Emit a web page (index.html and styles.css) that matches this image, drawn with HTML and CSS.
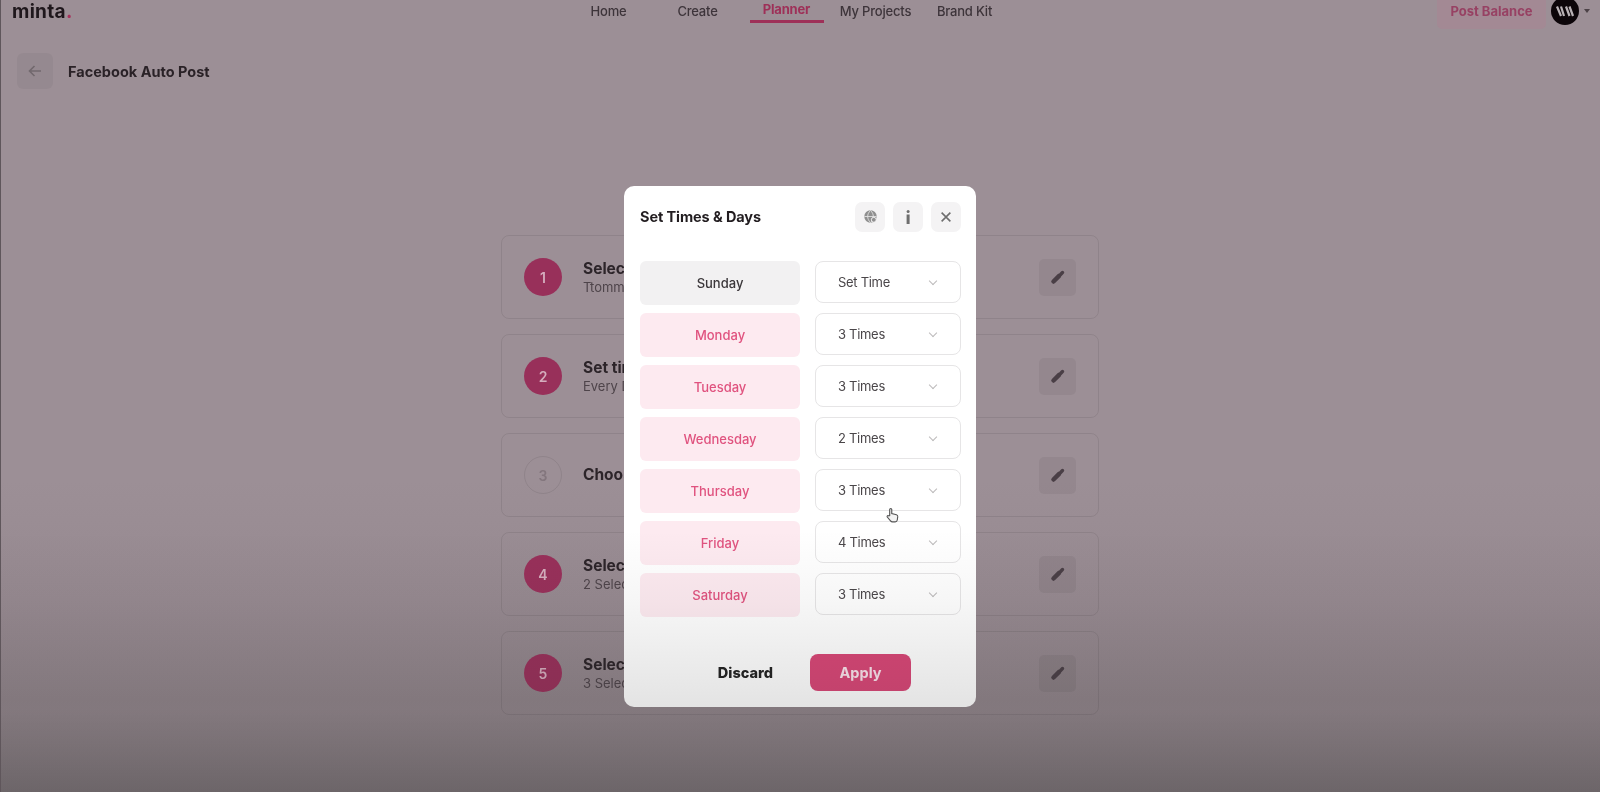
FILE: index.html
```html
<!DOCTYPE html>
<html lang="en">
<head>
<meta charset="utf-8">
<title>Facebook Auto Post</title>
<link rel="stylesheet" href="styles.css">
</head>
<body>
<div class="page">
  <header class="topbar">
    <div class="logo">minta<span class="logo-dot">.</span></div>
    <nav class="nav">
      <a class="nav-item">Home</a>
      <a class="nav-item">Create</a>
      <a class="nav-item nav-active">Planner</a>
      <a class="nav-item">My Projects</a>
      <a class="nav-item">Brand Kit</a>
    </nav>
    <div class="account">
      <div class="balance">Post Balance</div>
      <div class="avatar">
        <svg viewBox="0 0 28 28" width="28" height="28"><path d="M6 9.500 10 19M10 9.500 13 19M15 9.500 18.500 19M18.500 9.500 22 19" fill="none" stroke="#b9b2b6" stroke-width="2.200"/></svg>
      </div>
      <span class="caret"></span>
    </div>
  </header>

  <div class="subbar">
    <button class="back">
      <svg viewBox="0 0 16 16" width="16" height="16"><path d="M14 8H2.500M7.500 3 2.500 8l5 5" fill="none" stroke="#71686d" stroke-width="1.600"/></svg>
    </button>
    <h1 class="page-title">Facebook Auto Post</h1>
  </div>

  <main class="steps">
    <section class="step">
      <div class="num">1</div>
      <div class="step-text"><div class="step-title">Select Facebook Page</div><div class="step-sub">Ttommy Page</div></div>
      <button class="edit"><svg viewBox="0 0 16 16" width="18" height="18"><path class="pen" d="M4 12 9 7"/><path class="pen-tip" d="M10.500 5.500 12 4"/></svg></button>
    </section>
    <section class="step">
      <div class="num">2</div>
      <div class="step-text"><div class="step-title">Set times and days</div><div class="step-sub">Every Day</div></div>
      <button class="edit"><svg viewBox="0 0 16 16" width="18" height="18"><path class="pen" d="M4 12 9 7"/><path class="pen-tip" d="M10.500 5.500 12 4"/></svg></button>
    </section>
    <section class="step">
      <div class="num num-empty">3</div>
      <div class="step-text"><div class="step-title">Choose a template</div></div>
      <button class="edit"><svg viewBox="0 0 16 16" width="18" height="18"><path class="pen" d="M4 12 9 7"/><path class="pen-tip" d="M10.500 5.500 12 4"/></svg></button>
    </section>
    <section class="step">
      <div class="num">4</div>
      <div class="step-text"><div class="step-title">Select categories</div><div class="step-sub">2 Selected</div></div>
      <button class="edit"><svg viewBox="0 0 16 16" width="18" height="18"><path class="pen" d="M4 12 9 7"/><path class="pen-tip" d="M10.500 5.500 12 4"/></svg></button>
    </section>
    <section class="step">
      <div class="num">5</div>
      <div class="step-text"><div class="step-title">Select products</div><div class="step-sub">3 Selected</div></div>
      <button class="edit"><svg viewBox="0 0 16 16" width="18" height="18"><path class="pen" d="M4 12 9 7"/><path class="pen-tip" d="M10.500 5.500 12 4"/></svg></button>
    </section>
  </main>

  <div class="modal">
    <div class="modal-head">
      <h2 class="modal-title">Set Times &amp; Days</h2>
      <div class="modal-tools">
        <button class="tool"><svg viewBox="0 0 16 16" width="15" height="15"><circle cx="8" cy="8" r="6.600" fill="#8f8f8f"/><path d="M1.500 8h13M8 1.500c-4 4-4 9 0 13M8 1.500c4 4 4 9 0 13" fill="none" stroke="#e6e6e6" stroke-width=".9"/><circle cx="11.500" cy="11.500" r="2.600" fill="#8f8f8f" stroke="#f4f3f4"/></svg></button>
        <button class="tool"><svg viewBox="0 0 16 16" width="16" height="16"><rect x="6.600" y="1" width="3" height="3" rx="1.500" fill="#6e6e6e"/><rect x="6.600" y="5.500" width="3" height="9.500" fill="#6e6e6e"/></svg></button>
        <button class="tool"><svg viewBox="0 0 16 16" width="14" height="14"><path d="M3 3l10 10M13 3 3 13" fill="none" stroke="#6e6e6e" stroke-width="1.800"/></svg></button>
      </div>
    </div>
    <div class="days">
      <div class="day day-off">Sunday</div>
      <div class="select"><span>Set Time</span><i class="chev"></i></div>
      <div class="day">Monday</div>
      <div class="select"><span>3 Times</span><i class="chev"></i></div>
      <div class="day">Tuesday</div>
      <div class="select"><span>3 Times</span><i class="chev"></i></div>
      <div class="day">Wednesday</div>
      <div class="select"><span>2 Times</span><i class="chev"></i></div>
      <div class="day">Thursday</div>
      <div class="select"><span>3 Times</span><i class="chev"></i></div>
      <div class="day">Friday</div>
      <div class="select"><span>4 Times</span><i class="chev"></i></div>
      <div class="day">Saturday</div>
      <div class="select"><span>3 Times</span><i class="chev"></i></div>
    </div>
    <div class="modal-foot">
      <button class="discard">Discard</button>
      <button class="apply">Apply</button>
    </div>
  </div>

  <svg class="cursor" viewBox="0 0 16 18" width="15" height="17"><path d="M5 9V2.600a1.100 1.100 0 0 1 2.200 0V7l5 1.200c1 .3 1.500 1 1.400 2l-.5 3.600c-.2 1.200-1 2-2.200 2H8c-.9 0-1.600-.4-2.100-1.100L2.400 10.600c-.6-1 .7-2 1.600-1.200Z" fill="#f3f3f3" stroke="#555" stroke-width="1.200"/></svg>
  <div class="shade"></div>
</div>
</body>
</html>
```
FILE: styles.css
```css
* { box-sizing: border-box; }
html, body { margin: 0; height: 792px; overflow: hidden; }
body { font-family: Inter, "Noto Sans", sans-serif; color: #2c2429; }
button { font: inherit; border: 0; padding: 0; }
h1, h2 { margin: 0; }

.page {
  position: relative;
  width: 1600px;
  height: 792px;
  overflow: hidden;
  background: linear-gradient(to bottom, #9c8f96 480px, #968990 600px, #8f8389 700px, #9a8e94 792px);
  border-left: 1px solid #5f565b;
  filter: blur(.4px);
}

.topbar {
  display: grid;
  grid-template-columns: 563px 445px 1fr;
  height: 30px;
}
.logo {
  padding-left: 11px;
  font-size: 19px;
  font-weight: 700;
  letter-spacing: .3px;
  color: #1f171c;
}
.logo-dot { color: #a8325c; }

.nav { display: grid; grid-template-columns: repeat(5, 89px); }
.nav-item {
  justify-self: center;
  align-self: start;
  padding-top: 3px;
  font-size: 13px;
  line-height: 17px;
  font-weight: 500;
  letter-spacing: -.2px;
  color: #3d343a;
}
.nav-active {
  width: 74px;
  height: 23px;
  padding-top: 1px;
  text-align: center;
  font-weight: 700;
  color: #9e3058;
  border-bottom: 3px solid #9e3058;
}

.account { display: flex; align-items: flex-start; padding-left: 428px; }
.balance {
  width: 109px;
  height: 29px;
  border-radius: 0 0 5px 5px;
  background: #a38994;
  color: #974163;
  font-size: 13px;
  line-height: 22px;
  font-weight: 700;
  text-align: center;
}
.avatar {
  width: 28px;
  height: 28px;
  margin: -3px 0 0 5px;
  border-radius: 50%;
  background: #0c0509;
}
.caret {
  width: 0;
  height: 0;
  margin: 9px 0 0 5px;
  border: 3px solid transparent;
  border-top: 4px solid #4c4247;
}

.subbar {
  display: flex;
  align-items: center;
  gap: 15px;
  height: 36px;
  margin: 23px 0 0 16px;
}
.back {
  display: flex;
  align-items: center;
  justify-content: center;
  width: 36px;
  height: 36px;
  border-radius: 6px;
  background: rgba(0, 0, 0, .04);
}
.page-title {
  font-size: 14.5px;
  font-weight: 700;
  color: #2a2227;
}

.steps {
  display: flex;
  flex-direction: column;
  gap: 15px;
  width: 598px;
  margin: 146px 0 0 500px;
}
.step {
  display: flex;
  align-items: center;
  height: 84px;
  padding: 0 22px;
  border: 1.5px solid rgba(0, 0, 0, .08);
  border-radius: 8px;
}
.num {
  display: flex;
  align-items: center;
  justify-content: center;
  flex: none;
  width: 38px;
  height: 38px;
  border-radius: 50%;
  background: #98305a;
  color: #d5adbd;
  font-size: 14px;
  font-weight: 600;
}
.num-empty {
  background: none;
  border: 1.5px solid rgba(0, 0, 0, .08);
  color: #83767d;
}
.step-text { flex: 1; margin-left: 21px; }
.step-title { font-size: 15.5px; line-height: 20px; font-weight: 700; color: #2c2429; }
.step-sub { font-size: 13px; line-height: 17px; color: #4e444a; }
.edit {
  display: flex;
  align-items: center;
  justify-content: center;
  width: 37px;
  height: 37px;
  border-radius: 5px;
  background: rgba(0, 0, 0, .05);
}
.pen { fill: none; stroke: #4a3f46; stroke-width: 4; stroke-linecap: round; }
.pen-tip { fill: none; stroke: #4a3f46; stroke-width: 3; stroke-linecap: round; }

.modal {
  position: absolute;
  left: 623px;
  top: 186px;
  width: 352px;
  height: 521px;
  padding: 16px 15px 15px 16px;
  border-radius: 10px;
  background: #fff;
}
.modal-head {
  display: flex;
  align-items: center;
  justify-content: space-between;
  height: 29px;
}
.modal-title { font-size: 14.5px; font-weight: 700; letter-spacing: -.1px; color: #221d20; }
.modal-tools { display: flex; gap: 8px; }
.tool {
  display: flex;
  align-items: center;
  justify-content: center;
  width: 30px;
  height: 30px;
  border-radius: 7px;
  background: #f4f3f4;
}

.days {
  display: grid;
  grid-template-columns: 160px 146px;
  grid-auto-rows: 44px;
  column-gap: 15px;
  row-gap: 8px;
  margin-top: 30px;
}
.day {
  display: flex;
  align-items: center;
  justify-content: center;
  border-radius: 6px;
  background: #fdeaf0;
  color: #e0537f;
  font-size: 13px;
  font-weight: 500;
}
.day-off { background: #f2f1f2; color: #3b373a; }
.select {
  display: flex;
  align-items: center;
  justify-content: space-between;
  height: 42px;
  padding: 0 24px 0 22px;
  border: 1.5px solid #e6e5e6;
  border-radius: 8px;
  font-size: 13px;
  letter-spacing: -.3px;
  color: #4a4649;
}
.chev {
  width: 6px;
  height: 6px;
  margin: -3px 0 0;
  border-right: 1px solid #bcbabb;
  border-bottom: 1px solid #bcbabb;
  transform: rotate(45deg);
}

.modal-foot {
  display: flex;
  justify-content: flex-end;
  align-items: center;
  gap: 37px;
  margin: 37px 50px 0 0;
}
.discard { background: none; font-size: 14.5px; font-weight: 800; color: #222; }
.apply {
  width: 101px;
  height: 37px;
  border-radius: 8px;
  background: #d84676;
  color: #fbe4ec;
  font-size: 14.5px;
  font-weight: 700;
}

.cursor { position: absolute; left: 884px; top: 507px; }

.shade {
  position: absolute;
  inset: 0;
  pointer-events: none;
  background: linear-gradient(to bottom,
    rgba(40, 40, 40, 0) 530px,
    rgba(40, 40, 40, .04) 600px,
    rgba(40, 40, 40, .13) 710px,
    rgba(40, 40, 40, .4) 792px);
}
```
